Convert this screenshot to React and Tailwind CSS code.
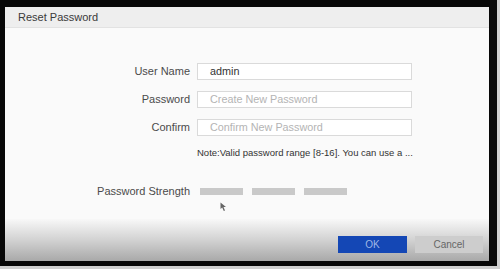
import React from "react";

function Field({ label, value, placeholder }) {
  return (
    <div className="flex items-center">
      <div className="w-[192px] pr-[7px] text-right text-[11px] text-[#4a4a4a]">{label}</div>
      <div className="w-[215px] h-[17px] border border-[#dadada] bg-white flex items-center pl-[12px] text-[10.8px]">
        {value ? (
          <span className="text-[#333]">{value}</span>
        ) : (
          <span className="text-[#b4b4b4]">{placeholder}</span>
        )}
      </div>
    </div>
  );
}

function App() {
  return (
    <div
      className="w-[500px] h-[269px] bg-[#cfcfcf] overflow-hidden"
      style={{ fontFamily: '"Liberation Sans", Arial, sans-serif' }}
    >
      <div className="w-[497px] h-[266px] bg-[#080808] pt-[7px] pl-[5px]">
        <div className="w-[484px] h-[254px] flex flex-col bg-[#fafafa] relative">
          {/* title bar */}
          <div className="h-[21px] bg-[#eeeeee] border-b border-[#e2e2e2] flex items-center pl-[13px] text-[11px] text-[#3a3a3a]">
            Reset Password
          </div>

          {/* form */}
          <div className="flex-1 flex flex-col pt-[35px]">
            <div className="flex flex-col gap-[11px]">
              <Field label="User Name" value="admin" />
              <Field label="Password" placeholder="Create New Password" />
              <Field label="Confirm" placeholder="Confirm New Password" />
            </div>
            <div className="pl-[192px] mt-[10px] text-[9.5px] text-[#333]">
              Note:Valid password range [8-16]. You can use a ...
            </div>
            <div className="flex items-center mt-[23px]">
              <div className="w-[192px] pr-[7px] text-right text-[11px] text-[#4a4a4a]">Password Strength</div>
              <div className="flex gap-[9px] pl-[3px]">
                <div className="w-[43px] h-[7px] bg-[#c9c9c9]" />
                <div className="w-[43px] h-[7px] bg-[#c9c9c9]" />
                <div className="w-[43px] h-[7px] bg-[#c9c9c9]" />
              </div>
            </div>
          </div>

          {/* mouse cursor */}
          <svg className="absolute left-[215px] top-[195px]" width="7" height="10" viewBox="0 0 7 10">
            <path d="M0.5 0.5 L0.5 7 L2.2 5.5 L3.8 9 L5 8.5 L3.5 5 L6 5 Z" fill="#666" />
          </svg>

          {/* footer */}
          <div className="h-[42px] bg-gradient-to-b from-[#f8f8f8] via-[#d2d2d2] to-[#a9a9a9] flex justify-end items-start pt-[17px] pr-[6px] gap-[8px]">
            <button className="w-[69px] h-[17px] bg-[#1447b5] text-[#9fb6e6] text-[10px]">OK</button>
            <button className="w-[68px] h-[17px] bg-[#cdcdcd] text-[#666] text-[10px]">Cancel</button>
          </div>
        </div>
      </div>
    </div>
  );
}

export default App;
